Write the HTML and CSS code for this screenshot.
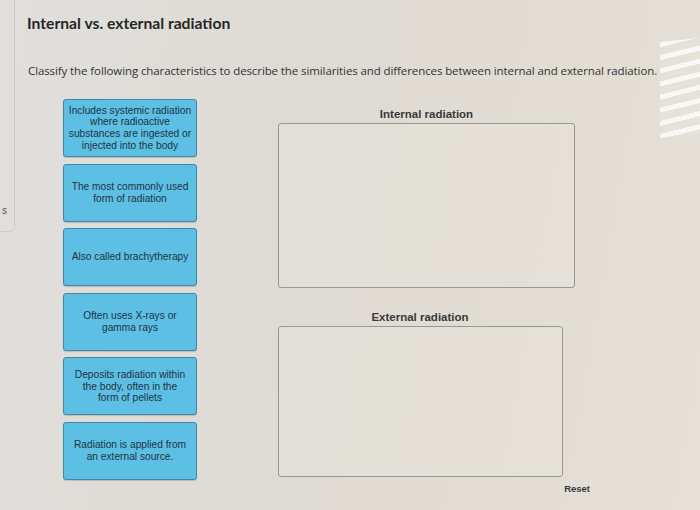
FILE: index.html
```html
<!DOCTYPE html>
<html>
<head>
<meta charset="utf-8">
<link rel="stylesheet" href="styles.css">
</head>
<body>
<div class="side-panel"><span class="side-text">s</span></div>
<div class="glare"></div>
<div class="page">
  <h1 class="title">Internal vs. external radiation</h1>
  <p class="prompt">Classify the following characteristics to describe the similarities and differences between internal and external radiation.</p>
  <div class="main">
    <div class="cards">
      <div class="card">Includes systemic radiation<br>where radioactive<br>substances are ingested or<br>injected into the body</div>
      <div class="card">The most commonly used<br>form of radiation</div>
      <div class="card">Also called brachytherapy</div>
      <div class="card">Often uses X-rays or<br>gamma rays</div>
      <div class="card">Deposits radiation within<br>the body, often in the<br>form of pellets</div>
      <div class="card">Radiation is applied from<br>an external source.</div>
    </div>
    <div class="zones">
      <div class="zone zone-1">
        <div class="zone-label">Internal radiation</div>
        <div class="zone-box zone-box-1"></div>
      </div>
      <div class="zone zone-2">
        <div class="zone-label">External radiation</div>
        <div class="zone-box zone-box-2"></div>
      </div>
      <div class="reset-row"><span class="reset">Reset</span></div>
    </div>
  </div>
</div>
</body>
</html>
```
FILE: styles.css
```css
html, body {
  margin: 0;
  padding: 0;
  width: 700px;
  height: 510px;
  overflow: hidden;
}
body {
  position: relative;
  background: linear-gradient(100deg, #e1dfdc 0%, #dedbd5 40%, #e2ddd3 70%, #e6e1d8 100%);
  font-family: "Liberation Sans", Arial, sans-serif;
  color: #2b2b2b;
}
.side-panel {
  position: absolute;
  left: -6px;
  top: -4px;
  width: 19px;
  height: 234px;
  border: 1px solid #d0ccc5;
  border-radius: 0 0 6px 0;
  background: #e1dfdb;
}
.side-text {
  position: absolute;
  left: 7px;
  top: 208px;
  font-size: 10px;
  color: #555;
}
.glare {
  position: absolute;
  left: 660px;
  top: 40px;
  width: 40px;
  height: 96px;
  background: repeating-linear-gradient(172deg, rgba(255,255,255,0.9) 0 5px, rgba(238,236,230,0.2) 5px 13px);
  transform: skewY(-6deg);
  opacity: 0.85;
}
.page {
  position: relative;
  padding: 14px 0 0 27px;
}
.title {
  margin: 0;
  font-family: Lato, "Open Sans", "Liberation Sans", sans-serif;
  font-weight: 700;
  font-size: 15.7px;
  line-height: 19px;
  color: #262626;
}
.prompt {
  margin: 31px 0 0 1px;
  font-family: "Open Sans", "Liberation Sans", sans-serif;
  font-size: 11.5px;
  line-height: 14px;
  color: #333;
  letter-spacing: -0.1px;
  white-space: nowrap;
}
.main {
  display: flex;
  margin-top: 21px;
}
.cards {
  display: flex;
  flex-direction: column;
  gap: 6.6px;
  margin-left: 36px;
  width: 134px;
}
.card {
  box-sizing: border-box;
  height: 58px;
  display: flex;
  align-items: center;
  justify-content: center;
  text-align: center;
  padding: 0 2px;
  background: #5cbfe3;
  border: 1px solid #3e88a6;
  border-radius: 3px;
  box-shadow: 0 1px 1px rgba(0,0,0,0.15);
  font-size: 10.2px;
  line-height: 11.7px;
  color: #1f3444;
  white-space: nowrap;
}
.zones {
  margin-left: 81px;
  padding-top: 8px;
  width: 312px;
  display: flex;
  flex-direction: column;
}
.zone-label {
  text-align: center;
  font-weight: 700;
  font-size: 11.5px;
  line-height: 14px;
  color: #3a3a3a;
  margin-bottom: 2px;
}
.zone-box {
  box-sizing: border-box;
  border: 1px solid #9a9790;
  border-radius: 3px;
  background: rgba(232, 229, 223, 0.4);
}
.zone-1 .zone-label {
  width: 297px;
}
.zone-box-1 {
  width: 297px;
  height: 165px;
}
.zone-2 {
  margin-top: 22px;
}
.zone-2 .zone-label {
  width: 284px;
}
.zone-box-2 {
  width: 285px;
  height: 151px;
}
.reset-row {
  display: flex;
  justify-content: flex-end;
  margin-top: 6px;
}
.reset {
  font-weight: 700;
  font-size: 9.5px;
  color: #3a3a3a;
}
```
